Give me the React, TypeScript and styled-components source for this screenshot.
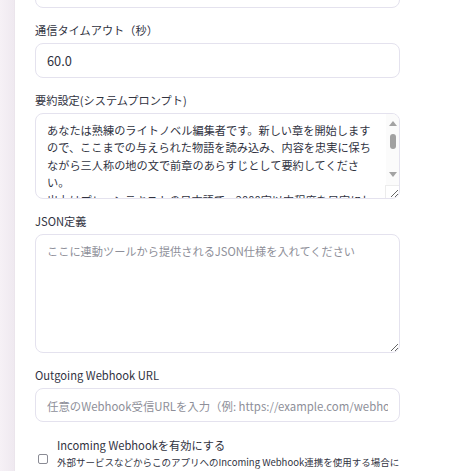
import React from 'react'
import styled, { createGlobalStyle } from 'styled-components'

const GlobalStyle = createGlobalStyle`
  html, body {
    margin: 0;
    padding: 0;
    background: #ffffff;
    overflow: hidden;
  }
  body {
    font-family: "Noto Sans CJK JP", "Noto Sans", sans-serif;
    color: #31333f;
  }
`

const Page = styled.div`
  display: flex;
  width: 474px;
  height: 471px;
  overflow: hidden;
`

const SideStrip = styled.div`
  width: 14px;
  flex-shrink: 0;
  background: linear-gradient(90deg, #f6f1f6 0%, #efe9f0 100%);
  border-right: 1px solid #ebe5ec;
`

const Main = styled.main`
  flex: 1;
  padding-left: 20px;
  display: flex;
  flex-direction: column;
`

const Form = styled.div`
  width: 365px;
  display: flex;
  flex-direction: column;
  gap: 14px;
`

const Field = styled.div<{ $offset?: number }>`
  display: flex;
  flex-direction: column;
  gap: 5px;
  margin-top: ${p => (p.$offset ? `${p.$offset}px` : '0')};
`

const Label = styled.label`
  font-size: 11.2px;
  line-height: 16px;
  color: #31333f;
`

const TextInput = styled.input<{ $h?: number }>`
  box-sizing: border-box;
  width: 100%;
  height: ${p => p.$h ?? 35}px;
  padding: 0 11px;
  border: 1px solid #e4e2ee;
  border-radius: 8px;
  background: #ffffff;
  font-family: inherit;
  font-size: 12.8px;
  color: #31333f;
  outline: none;

  &::placeholder {
    color: #8e8f99;
    font-size: 11.4px;
  }
`

const AreaWrap = styled.div`
  position: relative;
`

const TextArea = styled.textarea<{ $h: number; $bar?: boolean }>`
  display: block;
  box-sizing: border-box;
  width: 100%;
  height: ${p => p.$h}px;
  padding: 8px ${p => (p.$bar ? 22 : 11)}px 8px 11px;
  border: 1px solid #e4e2ee;
  border-radius: 8px;
  background: #ffffff;
  font-family: inherit;
  font-size: 11.2px;
  line-height: 17.4px;
  color: #31333f;
  outline: none;
  resize: vertical;
  overflow: hidden;
  white-space: pre-wrap;

  &::placeholder {
    color: #8e8f99;
    font-size: 11.2px;
  }
`

/* classic scrollbar drawn over the prompt box */
const ScrollBar = styled.div`
  position: absolute;
  top: 1px;
  right: 1px;
  bottom: 13px;
  width: 13px;
  background: #fbfbfb;
  border-top-right-radius: 7px;
  pointer-events: none;
`

const Arrow = styled.span<{ $dir: 'up' | 'down' }>`
  position: absolute;
  left: 3px;
  ${p => (p.$dir === 'up' ? 'top: 7px;' : 'bottom: 9px;')}
  width: 0;
  height: 0;
  border-left: 4px solid transparent;
  border-right: 4px solid transparent;
  ${p =>
    p.$dir === 'up'
      ? 'border-bottom: 5px solid #a3a3a3;'
      : 'border-top: 5px solid #a3a3a3;'}
`

const Thumb = styled.span`
  position: absolute;
  top: 20px;
  left: 4px;
  width: 6px;
  height: 15px;
  border-radius: 3px;
  background: #a1a1a1;
`

const Corner = styled.span`
  position: absolute;
  right: 1px;
  bottom: 1px;
  width: 13px;
  height: 12px;
  border-top: 1px solid #ececec;
  border-left: 1px solid #ececec;
  pointer-events: none;
`

const CheckRow = styled.div`
  display: flex;
  gap: 9px;
  margin-top: 1px;
  padding-left: 3px;
`

const Box = styled.span`
  flex-shrink: 0;
  width: 8px;
  height: 8px;
  margin-top: 17px;
  border: 1px solid #8a8b94;
  border-radius: 2px;
  background: #ffffff;
`

const CheckText = styled.div`
  width: 345px;
  display: flex;
  flex-direction: column;
`

const CheckTitle = styled.span`
  font-size: 11.2px;
  line-height: 17px;
  color: #31333f;
`

const CheckHelp = styled.span`
  font-size: 9.5px;
  line-height: 16px;
  color: #31333f;
`

const prompt =
  'あなたは熟練のライトノベル編集者です。新しい章を開始しますので、ここまでの与えられた物語を読み込み、内容を忠実に保ちながら三人称の地の文で前章のあらすじとして要約してください。\n出力はプレーンテキストの日本語で、2000字以内程度を目安にしてください。'

export default function App() {
  return (
    <>
      <GlobalStyle />
      <Page>
        <SideStrip />
        <Main>
          <Form>
            <Field $offset={-30}>
              <TextInput $h={38} readOnly defaultValue="" />
            </Field>
            <Field>
              <Label>通信タイムアウト（秒）</Label>
              <TextInput readOnly defaultValue="60.0" />
            </Field>
            <Field>
              <Label>要約設定(システムプロンプト)</Label>
              <AreaWrap>
                <TextArea $h={86} $bar readOnly defaultValue={prompt} />
                <ScrollBar>
                  <Arrow $dir="up" />
                  <Thumb />
                  <Arrow $dir="down" />
                </ScrollBar>
                <Corner />
              </AreaWrap>
            </Field>
            <Field>
              <Label>JSON定義</Label>
              <TextArea
                $h={119}
                readOnly
                placeholder="ここに連動ツールから提供されるJSON仕様を入れてください"
              />
            </Field>
            <Field>
              <Label>Outgoing Webhook URL</Label>
              <TextInput
                $h={34}
                readOnly
                placeholder="任意のWebhook受信URLを入力（例: https://example.com/webhook）"
              />
            </Field>
            <CheckRow>
              <Box />
              <CheckText>
                <CheckTitle>Incoming Webhookを有効にする</CheckTitle>
                <CheckHelp>
                  外部サービスなどからこのアプリへのIncoming Webhook連携を使用する場合にチェックしてください。
                </CheckHelp>
              </CheckText>
            </CheckRow>
          </Form>
        </Main>
      </Page>
    </>
  )
}
